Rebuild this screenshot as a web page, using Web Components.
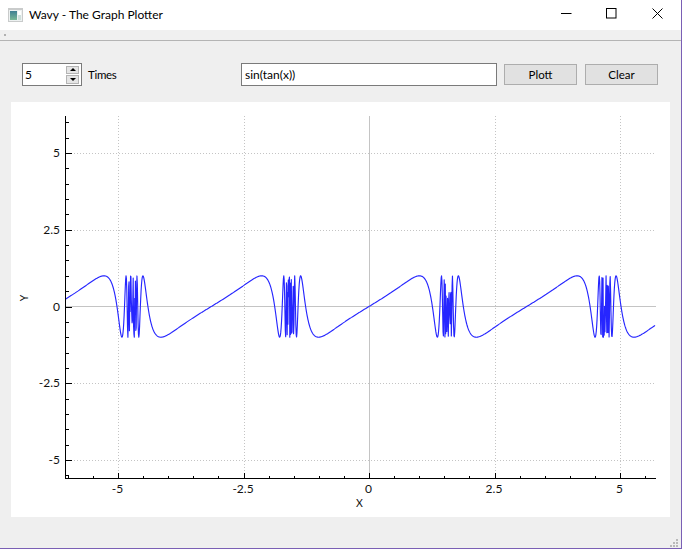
<!DOCTYPE html>
<html><head><meta charset="utf-8"><title>Wavy</title>
<style>
html,body{margin:0;padding:0;background:#efefef;overflow:hidden}
body{font:12px Lato,sans-serif;color:#000}
</style></head><body>
<wavy-window>
  <title-bar slot="title">Wavy - The Graph Plotter</title-bar>
  <div slot="tools" style="display:contents">
    <spin-box value="5"></spin-box>
    <span style="margin-left:6px;width:153px;font:11.5px Lato,sans-serif;letter-spacing:-.3px;color:#000">Times</span>
    <line-edit value="sin(tan(x))"></line-edit>
    <push-button style="margin-left:7px">Plott</push-button>
    <push-button style="margin-left:8px">Clear</push-button>
  </div>
  <graph-plot slot="plot" expr="sin(tan(x))"></graph-plot>
</wavy-window>
<script>
function def(name, html, init){
  customElements.define(name, class extends HTMLElement{
    constructor(){super();this.attachShadow({mode:'open'}).innerHTML=typeof html==='function'?html(this):html;}
    connectedCallback(){ if(init) init.call(this,this.shadowRoot); }
  });
}
def('wavy-window',`<style>
:host{display:flex;flex-direction:column;width:682px;height:549px;box-sizing:border-box;border-right:1px solid #7a5fb5;border-bottom:1px solid #7a5fb5;background:#efefef;position:relative;overflow:hidden}
.menu{height:10px;background:#f0f0f0;border-bottom:1px solid #b4b4b4;position:relative;flex:none}
.menu i{position:absolute;left:4px;top:4px;width:2px;height:2px;background:#b0b0b0}
.tools{display:flex;align-items:center;height:23px;margin:22px 0 0 22px;padding-right:23px;flex:none}
.plot{margin:16px 11px 0 11px;flex:none}
.grip{position:absolute;right:3px;bottom:1px;display:grid;grid-template-columns:repeat(3,2px);grid-auto-rows:2px;gap:1px}
.grip b{background:#b9b9b9}.grip b.n{background:none}
</style>
<slot name="title"></slot>
<div class="menu"><i></i></div>
<div class="tools"><slot name="tools"></slot></div>
<div class="plot"><slot name="plot"></slot></div>
<div class="grip"><b class="n"></b><b class="n"></b><b></b><b class="n"></b><b></b><b></b><b></b><b></b><b></b></div>`);

def('title-bar',`<style>
:host{display:flex;align-items:center;height:30px;background:#fff;flex:none;font:12px Lato,sans-serif;color:#000}
svg{display:block}
.ic{margin-left:8px;margin-right:6px;flex:none}
.t{flex:1;margin-top:-2px;white-space:nowrap}
.c{width:45.5px;height:27px;display:flex;align-items:center;justify-content:center;flex:none;margin-top:-3px}
.cs{display:flex;margin-right:1px}
</style>
<svg class="ic" width="15" height="14" viewBox="0 0 15 14"><defs><linearGradient id="g" x1="0" y1="0" x2="0" y2="1"><stop offset="0" stop-color="#3f7f93"/><stop offset="1" stop-color="#7ab896"/></linearGradient></defs><rect width="15" height="14" fill="#c9cbcb"/><rect x="1" y="2" width="13" height="11" fill="#edf1f1"/><rect x="2" y="3" width="7" height="9" fill="url(#g)"/><rect x="10" y="3" width="3" height="4" fill="#fff"/><rect x="10" y="7" width="3" height="5" fill="#cfe0dc"/></svg>
<span class="t"><slot></slot></span>
<span class="cs">
<span class="c"><svg width="11" height="11" viewBox="0 0 11 11"><path d="M0 5.5H10.5" stroke="#000" fill="none"/></svg></span>
<span class="c"><svg width="11" height="11" viewBox="0 0 11 11"><rect x=".5" y=".5" width="9.5" height="9.5" stroke="#000" fill="none"/></svg></span>
<span class="c"><svg width="11" height="11" viewBox="0 0 11 11"><path d="M.5 .5L10.5 10.5M10.5 .5L.5 10.5" stroke="#000" fill="none"/></svg></span>
</span>`);

const field=`:host{display:block;box-sizing:border-box;height:23px;border:1px solid #7a7a7a;background:#fff;font:12px Lato,sans-serif;color:#000;flex:none}`;
def('spin-box',h=>`<style>${field}
:host{width:60px;display:flex;align-items:center;position:relative}
.v{flex:1;padding-left:2px;margin-top:-1px}
.b{width:13px;height:18px;margin-right:2px;margin-top:0;display:flex;flex-direction:column;gap:1px}
.b span{flex:1;background:#e5e5e5;border:1px solid #b4b4b4;display:flex;align-items:center;justify-content:center;box-sizing:border-box}
svg{display:block}
</style><span class="v">${h.getAttribute('value')}</span>
<div class="b"><span><svg width="6" height="3"><path d="M3 0L6 3H0Z" fill="#000"/></svg></span><span><svg width="6" height="3"><path d="M0 0H6L3 3Z" fill="#000"/></svg></span></div>`);
def('line-edit',h=>`<style>${field}
:host{width:256px;padding:3px 3px;line-height:15px;white-space:nowrap}
</style>${h.getAttribute('value')}`);
def('push-button',`<style>
:host{display:flex;align-items:center;justify-content:center;box-sizing:border-box;width:73px;height:21px;background:#e1e1e1;border:1px solid #adadad;font:11.5px Lato,sans-serif;color:#000;flex:none}
span{margin-top:-1px}
</style><span><slot></slot></span>`);

def('graph-plot',`<style>
:host{display:block;width:659px;height:415px;background:#fff}
svg{display:block}
text{font:12px Lato,sans-serif;fill:#111}
text.a{font-size:10.5px}
</style><svg id="s" width="659" height="415" viewBox="11 102 659 415" xmlns="http://www.w3.org/2000/svg"></svg>`,function(root){
  const X=v=>369+v*50.2, Y=v=>306.5-v*30.7;
  const L=65.5,R=656,T=116,B=478.5;
  let o='';
  const crisp='shape-rendering="crispEdges"';
  for(const v of [-5,-2.5,2.5,5]){
    const x=Math.round(X(v))+.5, y=Math.round(Y(v))+.5;
    o+=`<path d="M${x} ${T}V${B}" stroke="#c4c4c4" stroke-dasharray="1 2" ${crisp}/>`;
    o+=`<path d="M${L+2} ${y}H${R}" stroke="#c4c4c4" stroke-dasharray="1 2" ${crisp}/>`;
  }
  o+=`<path d="M369.5 ${T}V${B}M${L} 306.5H${R}" stroke="#c4c4c4" fill="none" ${crisp}/>`;
  let d='';
  for(let i=0;;i++){
    const x=-6.04+i*0.0075;
    if(x>5.7) break;
    const y=Math.sin(Math.tan(x));
    d+=(d?'L':'M')+X(x).toFixed(2)+' '+Y(y).toFixed(2);
  }
  o+=`<path d="${d}" stroke="#2626ff" fill="none" stroke-width="1.15" stroke-linejoin="round"/>`;
  let t='';
  for(let i=-12;i<=11;i++){
    const v=i*.5,x=Math.round(X(v))+.5,maj=i%5===0;
    if(x>=L&&x<=R) t+=`M${x} ${B}V${B-(maj?6:3)}`;
  }
  for(let i=-11;i<=12;i++){
    const v=i*.5,y=Math.round(Y(v))+.5,maj=i%5===0;
    if(y>=T&&y<=B) t+=`M${L} ${y}H${L+(maj?6:3)}`;
  }
  o+=`<path d="M${L} ${T}V${B+.5}M${L} ${B}H${R}${t}" stroke="#000" fill="none" ${crisp}/>`;
  for(const [v,s] of [[5,'5'],[2.5,'2.5'],[0,'0'],[-2.5,'-2.5'],[-5,'-5']]){
    o+=`<text x="60" y="${Math.round(Y(v))+4}" text-anchor="end">${s}</text>`;
    o+=`<text x="${X(v)-.5}" y="493" text-anchor="middle">${s}</text>`;
  }
  o+=`<text class="a" x="359.5" y="507" text-anchor="middle">X</text>`;
  o+=`<text class="a" transform="translate(27.5 298) rotate(-90)" text-anchor="middle">Y</text>`;
  root.getElementById('s').innerHTML=o;
});
</script>
</body></html>
